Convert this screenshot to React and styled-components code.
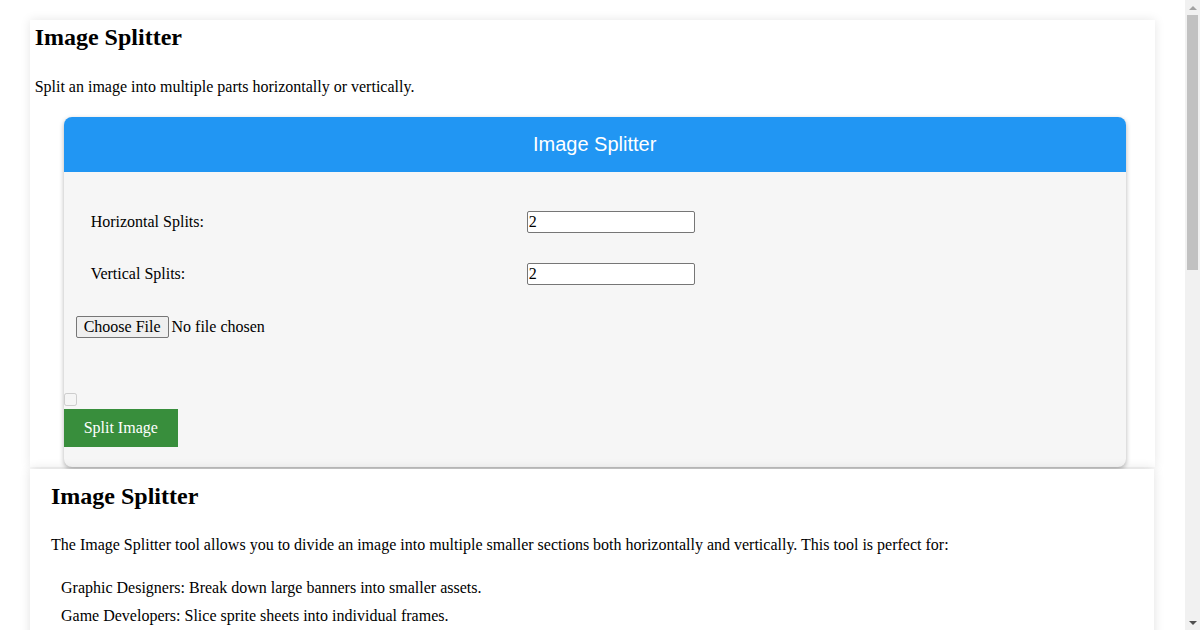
import React from "react";
import styled, { createGlobalStyle } from "styled-components";

const GlobalStyle = createGlobalStyle`
  html, body {
    margin: 0;
    padding: 0;
    background: #ffffff;
    font-family: "Liberation Serif", "Times New Roman", serif;
    color: #000;
  }
`;

const Viewport = styled.div`
  display: flex;
  height: 100vh;
  overflow: hidden;
`;

const Page = styled.main`
  flex: 1;
  min-width: 0;
  padding: 20px 0 20px;
`;

// window scrollbar, drawn at its top position
const ScrollTrack = styled.div`
  width: 15px;
  flex: none;
  background: #f1f1f1;
  display: flex;
  flex-direction: column;
  align-items: center;
`;

const ScrollArrow = styled.div`
  height: 15px;
  width: 15px;
  display: flex;
  align-items: center;
  justify-content: center;

  &::before {
    content: "";
    border-left: 4px solid transparent;
    border-right: 4px solid transparent;
    ${(p) =>
      p.down
        ? "border-top: 4px solid #505050;"
        : "border-bottom: 4px solid #a3a3a3;"}
  }
`;

const ScrollThumb = styled.div`
  width: 11px;
  height: 255px;
  background: #c1c1c1;
`;

const ScrollGap = styled.div`
  flex: 1;
`;

const ToolSection = styled.section`
  width: 95%;
  margin: 0 auto;
  padding: 4px 5px 0;
  box-sizing: border-box;
  background: #fff;
  box-shadow: 0 0 10px rgba(0, 0, 0, 0.1);
`;

const PageTitle = styled.h2`
  font-size: 24px;
  line-height: 27.6px;
  margin: 0 0 26.4px;
`;

const Lead = styled.p`
  font-size: 16px;
  line-height: 18.4px;
  margin: 0 0 20.6px;
`;

const Card = styled.div`
  width: 1062px;
  margin-left: 29px;
  background: #f6f6f6;
  border-radius: 8px;
  box-shadow: 0 2px 5px rgba(0, 0, 0, 0.3);
  overflow: hidden;
  padding-bottom: 20px;
`;

const CardHeader = styled.div`
  background: #2196f3;
  color: #fff;
  font-family: "Liberation Sans", Arial, sans-serif;
  font-size: 20px;
  line-height: 23px;
  padding: 16px 0;
  text-align: center;
`;

const Form = styled.div`
  padding: 24px 12px 0;
`;

const Fields = styled.div`
  display: grid;
  grid-template-columns: 436px 1fr;
`;

const Cell = styled.div`
  padding: 15px;
  display: flex;
  align-items: center;
  font-size: 16px;
`;

const NumberInput = styled.input`
  width: 168px;
  height: 22px;
  box-sizing: border-box;
  margin: 0;
  padding: 0 1px;
  font: 16px "Liberation Serif", "Times New Roman", serif;
  border: 1px solid #767676;
  border-radius: 2px;
  background: #fff;
`;

const FileInput = styled.input`
  display: block;
  margin: 16px 0 0;
  font: 16px "Liberation Serif", "Times New Roman", serif;
  height: 22px;

  &::file-selector-button {
    font: inherit;
    margin: 0 3px 0 0;
    padding: 0 7px;
    height: 22px;
    border: 1px solid #767676;
    border-radius: 2px;
    background: #efefef;
  }
`;

const KeepRatio = styled.input`
  display: block;
  margin: 55px 0 3px;
  width: 13px;
  height: 13px;
`;

const SplitButton = styled.button`
  display: block;
  background: #388e3c;
  color: #fff;
  border: none;
  font: 16px "Liberation Serif", "Times New Roman", serif;
  line-height: 18px;
  padding: 10px 20px;
  height: 38px;
  cursor: pointer;
`;

const InfoSection = styled.section`
  width: 1124px;
  margin: 2px 0 0 30px;
  padding: 14px 21px 30px;
  box-sizing: border-box;
  background: #fff;
  box-shadow: 0 0 10px rgba(0, 0, 0, 0.12);
`;

const InfoTitle = styled.h2`
  font-size: 24px;
  line-height: 27.6px;
  margin: ${(p) => (p.$first ? "0" : "34px")} 0 25.4px;
`;

const InfoText = styled.p`
  font-size: 16px;
  line-height: 18.4px;
  margin: 0 0 25px;
`;

const UseList = styled.ul`
  list-style: none;
  margin: 0 0 24px;
  padding: 0 0 0 10px;
`;

const UseItem = styled.li`
  font-size: 16px;
  line-height: 18px;
  margin-bottom: 10px;
`;

const uses = [
  "Graphic Designers: Break down large banners into smaller assets.",
  "Game Developers: Slice sprite sheets into individual frames.",
  "Web Developers: Create image tiles for faster loading pages.",
  "Social Media Managers: Prepare grid posts for Instagram profiles.",
  "Educators: Cut diagrams and worksheets into printable pieces.",
];

const steps = [
  "Enter the number of horizontal splits.",
  "Enter the number of vertical splits.",
  "Choose the image you want to split from your device.",
  "Click the Split Image button to generate the parts.",
  "Download each part separately once it appears below.",
];

const features = [
  "Fast: All processing happens right in your browser.",
  "Private: Your images are never uploaded to a server.",
  "Flexible: Split into any number of rows and columns.",
  "Free: No sign-up or installation is required.",
];

const App = () => (
  <>
    <GlobalStyle />
    <Viewport>
      <Page>
        <ToolSection>
          <PageTitle>Image Splitter</PageTitle>
          <Lead>Split an image into multiple parts horizontally or vertically.</Lead>
          <Card>
            <CardHeader>Image Splitter</CardHeader>
            <Form>
              <Fields>
                <Cell>Horizontal Splits:</Cell>
                <Cell>
                  <NumberInput type="text" defaultValue="2" />
                </Cell>
                <Cell>Vertical Splits:</Cell>
                <Cell>
                  <NumberInput type="text" defaultValue="2" />
                </Cell>
              </Fields>
              <FileInput type="file" accept="image/*" />
            </Form>
            <KeepRatio type="checkbox" disabled />
            <SplitButton>Split Image</SplitButton>
          </Card>
        </ToolSection>

        <InfoSection>
          <InfoTitle $first>Image Splitter</InfoTitle>
          <InfoText>
            The Image Splitter tool allows you to divide an image into multiple smaller sections both
            horizontally and vertically. This tool is perfect for:
          </InfoText>
          <UseList>
            {uses.map((u) => (
              <UseItem key={u}>{u}</UseItem>
            ))}
          </UseList>

          <InfoTitle>How to Use</InfoTitle>
          <UseList>
            {steps.map((s, i) => (
              <UseItem key={s}>
                {i + 1}. {s}
              </UseItem>
            ))}
          </UseList>

          <InfoTitle>Features</InfoTitle>
          <UseList>
            {features.map((f) => (
              <UseItem key={f}>{f}</UseItem>
            ))}
          </UseList>
        </InfoSection>
      </Page>
      <ScrollTrack>
        <ScrollArrow />
        <ScrollThumb />
        <ScrollGap />
        <ScrollArrow down />
      </ScrollTrack>
    </Viewport>
  </>
);

export default App;
